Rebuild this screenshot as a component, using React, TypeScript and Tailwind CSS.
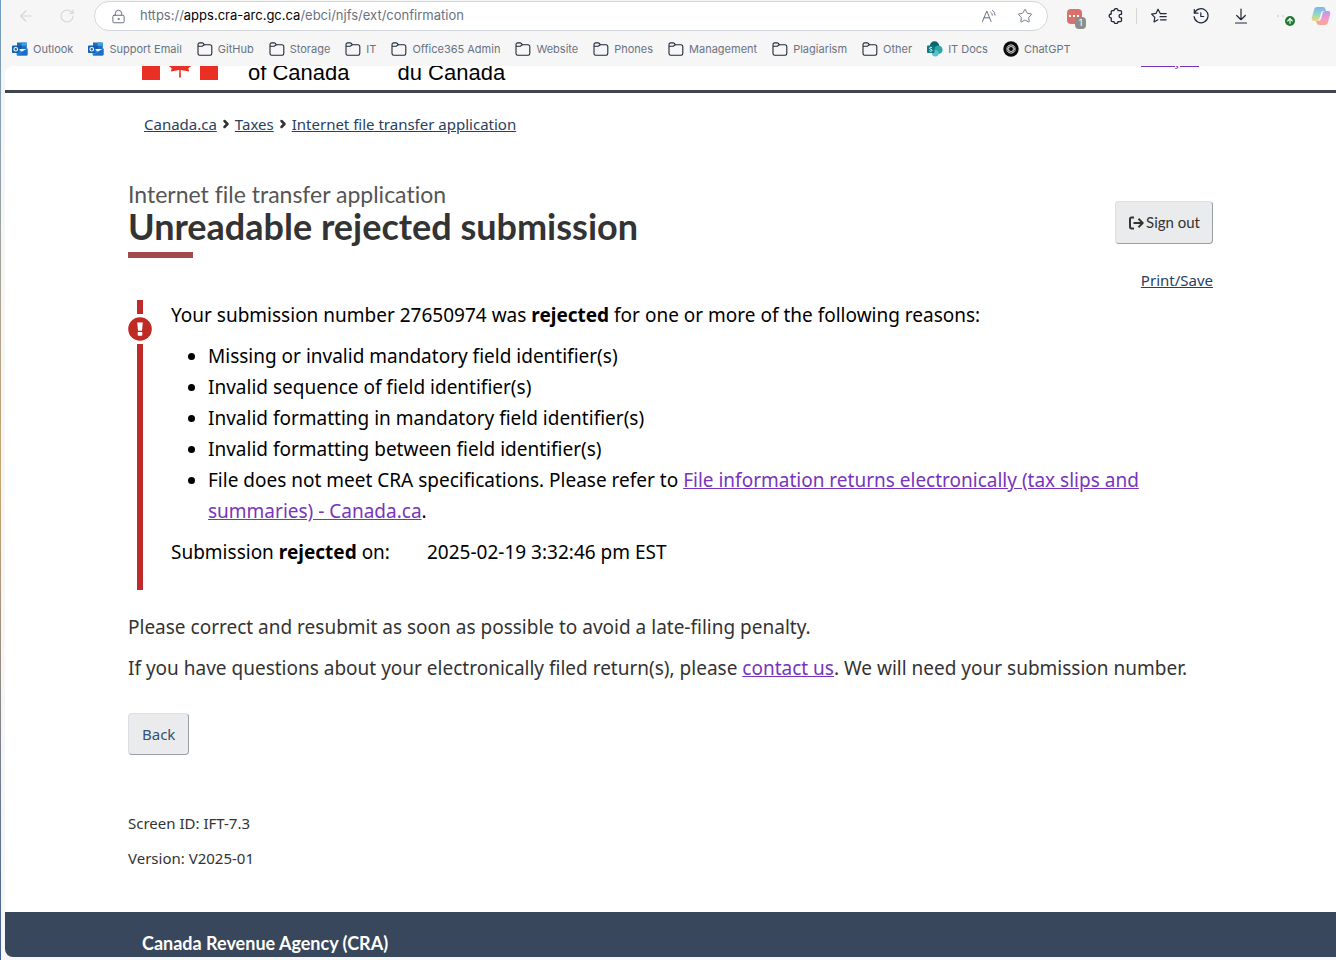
import React from "react";
import {
  ArrowLeft,
  ArrowUp,
  ChevronRight,
  LockKeyhole,
  RotateCw,
  Star,
} from "lucide-react";

const FolderIcon = () => (
  <svg
    viewBox="0 0 16 16"
    className="size-4 shrink-0 text-gray-800"
    fill="none"
    stroke="currentColor"
    strokeWidth="1.1"
    strokeLinejoin="round"
  >
    <path d="M1 4.6V3.5A1.6 1.6 0 0 1 2.6 1.9h2.6c.4 0 .8.2 1.1.5l1.2 1.4h5.6A1.7 1.7 0 0 1 14.8 5.5v7a1.7 1.7 0 0 1-1.7 1.7H2.7A1.7 1.7 0 0 1 1 12.5z" />
    <path d="M1 5.2h3.8c.4 0 .7-.1 1-.4l1.4-1" />
  </svg>
);

const OutlookIcon = () => (
  <svg viewBox="0 0 16 16" className="size-4 shrink-0">
    <path d="M5 1.5h9a.8.8 0 0 1 .8.8V8H5z" fill="#1f6fc0" />
    <path d="M9.5 1.5H14a.8.8 0 0 1 .8.8v2.5H9.5z" fill="#35a3e8" />
    <path d="M5 4.8h4.5V8H5z" fill="#1553a0" />
    <path d="M4.5 7.5 10 10.5l5.5-3v6a1 1 0 0 1-1 1h-9a1 1 0 0 1-1-1z" fill="#2b8be0" />
    <path d="m15.5 7.5-10.6 6.7c.2.2.4.3.6.3h9a1 1 0 0 0 1-1z" fill="#1a6fcb" />
    <rect x="0" y="4.5" width="7.5" height="7.5" rx=".8" fill="#1260b4" />
    <circle cx="3.75" cy="8.25" r="1.8" fill="none" stroke="#fff" strokeWidth="1.1" />
  </svg>
);

const SharePointIcon = () => (
  <svg viewBox="0 0 16 16" className="size-4 shrink-0">
    <circle cx="7.5" cy="5" r="4.7" fill="#0d6368" />
    <circle cx="11.3" cy="8.8" r="4.3" fill="#2ba5a8" />
    <circle cx="8.3" cy="12.3" r="3.3" fill="#54c5cc" />
    <rect x="0" y="4.5" width="7.5" height="7.5" rx=".8" fill="#0f7a80" />
    <path
      d="M5 6.7c-.8-.5-2.5-.5-2.5.6 0 1.2 2.6.7 2.6 2 0 1.2-1.9 1.1-2.7.5"
      fill="none"
      stroke="#fff"
      strokeWidth=".9"
    />
  </svg>
);

const ChatIcon = () => (
  <svg viewBox="0 0 16 16" className="size-4 shrink-0">
    <circle cx="8" cy="8" r="7.7" fill="#0b0b0b" />
    <g fill="none" stroke="#e5e5e5" strokeWidth=".7">
      <rect x="5.7" y="3.6" width="4.6" height="8.8" rx="2.3" />
      <rect x="5.7" y="3.6" width="4.6" height="8.8" rx="2.3" transform="rotate(60 8 8)" />
      <rect x="5.7" y="3.6" width="4.6" height="8.8" rx="2.3" transform="rotate(120 8 8)" />
    </g>
  </svg>
);

const ReadAloudIcon = () => (
  <svg
    viewBox="0 0 16 16"
    className="size-4"
    fill="none"
    stroke="currentColor"
    strokeLinecap="round"
    strokeLinejoin="round"
  >
    <path d="M1.5 13.5 5.8 3l4.3 10.5M3 9.8h5.6" />
    <path d="M9.8 4.2c1 .8 1.5 1.8 1.5 3M11.4 2.2c1.7 1.3 2.6 3 2.6 5" />
  </svg>
);

const PuzzleIcon = () => (
  <svg
    viewBox="0 0 16 16"
    className="size-4"
    fill="none"
    stroke="currentColor"
    strokeWidth="1.3"
    strokeLinejoin="round"
  >
    <path d="M4.2 2.6H6a2 2 0 0 1 4 0h2.5a1 1 0 0 1 1 1v2.7h-.7a1.8 1.8 0 0 0 0 3.6h.7v2.7a1 1 0 0 1-1 1H10a2 2 0 0 1-4 0H4.2a1 1 0 0 1-1-1V10a2 2 0 0 1 0-4V3.6a1 1 0 0 1 1-1z" />
  </svg>
);

const FavoritesIcon = () => (
  <svg
    viewBox="0 0 16 16"
    className="size-4"
    fill="none"
    stroke="currentColor"
    strokeWidth="1.2"
    strokeLinecap="round"
    strokeLinejoin="round"
  >
    <path d="M9.3 5.5 7 1.2 5 5.4l-4.4.7 3.2 3.2L3 14l4-2.2" />
    <path d="M9.5 5.6h5.7M9 8.7h6.2M9.5 11.8h5.7" />
  </svg>
);

const HistoryIcon = () => (
  <svg
    viewBox="0 0 16 16"
    className="size-4"
    fill="none"
    stroke="currentColor"
    strokeWidth="1.2"
    strokeLinecap="round"
    strokeLinejoin="round"
  >
    <path d="M1.3 1.5v3.7H5" />
    <path d="M1.6 5A7 7 0 1 1 1.1 8.6" />
    <path d="M7.8 4.8v3.7h2.9" />
  </svg>
);

const DownloadIcon = () => (
  <svg
    viewBox="0 0 16 16"
    className="size-4"
    fill="none"
    stroke="currentColor"
    strokeWidth="1.2"
    strokeLinecap="round"
    strokeLinejoin="round"
  >
    <path d="M8 1v10.5M3.7 7.5 8 11.7l4.3-4.2M2.5 15h11" />
  </svg>
);

const CopilotIcon = () => (
  <svg viewBox="0 0 20 20" className="size-5">
    <defs>
      <linearGradient id="cop-a" x1="0" y1="0" x2="0" y2="1">
        <stop offset="0" stopColor="#7fb2f5" />
        <stop offset=".5" stopColor="#8fd9c4" />
        <stop offset="1" stopColor="#f5d77c" />
      </linearGradient>
      <linearGradient id="cop-b" x1="0" y1="0" x2="0" y2="1">
        <stop offset="0" stopColor="#b49af5" />
        <stop offset=".5" stopColor="#ef9acb" />
        <stop offset="1" stopColor="#f8ab8c" />
      </linearGradient>
    </defs>
    <path
      d="M6 1h6c1.3 0 2 .7 2.4 2l.5 2h-2.4c-1.3 0-2 .7-2.4 2L8.3 13c-.4 1.3-1 2-2.3 2H3c-2 0-2.7-1.5-2.2-3.3L3 3.8C3.5 2 4.5 1 6 1z"
      fill="url(#cop-a)"
    />
    <path
      d="M14 19H8c-1.3 0-2-.7-2.4-2l-.5-2h2.4c1.3 0 2-.7 2.4-2l1.8-6c.4-1.3 1-2 2.3-2h3c2 0 2.7 1.5 2.2 3.3L17 16.2c-.5 1.8-1.5 2.8-3 2.8z"
      fill="url(#cop-b)"
    />
  </svg>
);

const SignOutIcon = () => (
  <svg
    viewBox="0 0 16 14"
    className="h-3.5 w-4"
    fill="none"
    stroke="currentColor"
    strokeWidth="2"
    strokeLinejoin="round"
  >
    <path d="M6 1.5H3.5A1.5 1.5 0 0 0 2 3v8a1.5 1.5 0 0 0 1.5 1.5H6" />
    <path d="M5.5 7h9M10.5 2.8 14.7 7l-4.2 4.2" />
  </svg>
);

const AlertIcon = () => (
  <svg viewBox="0 0 24 24" className="size-6">
    <circle cx="12" cy="12" r="11.8" fill="#bf2a25" />
    <path d="M9.2 5.5h5.6l-.8 8.2h-4z" fill="#fff" />
    <rect x="9.7" y="15" width="4.6" height="3.7" rx=".6" fill="#fff" />
  </svg>
);

// Only the bottom of the flag shows, the rest is scrolled under the toolbar
const FlagIcon = () => (
  <svg viewBox="0 0 76 36" className="h-9 w-[76px]">
    <path d="M0 0h18v36H0zM58 0h18v36H58z" fill="#ea2f24" />
    <path
      d="m38 1 3.5 6.5 3.5-1.8-1.5 9.3 4.5-4.8 1 2.3 5-.8-1.7 5 2.2 1.3-8.2 6.2.9 3.2-8.5-1.4.2 7.5h-1.8l.2-7.5-8.5 1.4.9-3.2-8.2-6.2 2.2-1.3-1.7-5 5 .8 1-2.3 4.5 4.8L31 5.7l3.5 1.8z"
      fill="#ea2f24"
    />
  </svg>
);

const bookmarks = [
  { name: "Outlook", icon: <OutlookIcon /> },
  { name: "Support Email", icon: <OutlookIcon /> },
  { name: "GitHub", icon: <FolderIcon /> },
  { name: "Storage", icon: <FolderIcon /> },
  { name: "IT", icon: <FolderIcon /> },
  { name: "Office365 Admin", icon: <FolderIcon /> },
  { name: "Website", icon: <FolderIcon /> },
  { name: "Phones", icon: <FolderIcon /> },
  { name: "Management", icon: <FolderIcon /> },
  { name: "Plagiarism", icon: <FolderIcon /> },
  { name: "Other", icon: <FolderIcon /> },
  { name: "IT Docs", icon: <SharePointIcon /> },
  { name: "ChatGPT", icon: <ChatIcon /> },
];

const reasons = [
  "Missing or invalid mandatory field identifier(s)",
  "Invalid sequence of field identifier(s)",
  "Invalid formatting in mandatory field identifier(s)",
  "Invalid formatting between field identifier(s)",
];

const Toolbar = () => (
  <div className="flex h-8 items-center text-gray-800">
    <button aria-label="Back" className="flex w-[42px] justify-center text-gray-300">
      <ArrowLeft className="size-[18px]" strokeWidth={1.5} />
    </button>
    <button aria-label="Reload" className="flex w-10 justify-center text-gray-300">
      <RotateCw className="size-4" strokeWidth={1.6} />
    </button>
    <div className="ml-[7px] flex h-[30px] min-w-0 flex-1 items-center rounded-full border border-gray-300 bg-white pr-3.5 pl-4 text-gray-500">
      <LockKeyhole className="size-[15px] shrink-0" strokeWidth={1.6} />
      {/* The host is darker than the rest of the address */}
      <div className="ml-3.5 flex-1 truncate text-[13px]">
        https://<span className="text-black">apps.cra-arc.gc.ca</span>
        /ebci/njfs/ext/confirmation
      </div>
      <button aria-label="Read aloud" className="mr-5">
        <ReadAloudIcon />
      </button>
      <button aria-label="Add to favorites">
        <Star className="size-4" strokeWidth={1.4} />
      </button>
    </div>
    <button aria-label="Password manager" className="relative ml-2 flex w-10 justify-center">
      <span className="-ml-1 flex size-[15px] items-center justify-center gap-0.5 rounded-sm bg-[#d9716c]">
        <span className="size-0.5 bg-white" />
        <span className="size-0.5 bg-white" />
        <span className="size-0.5 bg-white" />
      </span>
      <span className="absolute top-2 right-2.5 flex h-3 w-[11px] items-center justify-center rounded-sm bg-[#8b8f8b] text-[9px] text-white">
        1
      </span>
    </button>
    <button aria-label="Extensions" className="flex w-10 justify-center">
      <PuzzleIcon />
    </button>
    <span className="h-4 w-px bg-gray-300" />
    <button aria-label="Favorites" className="flex w-11 justify-center">
      <FavoritesIcon />
    </button>
    <button aria-label="History" className="flex w-10 justify-center">
      <HistoryIcon />
    </button>
    <button aria-label="Downloads" className="flex w-10 justify-center">
      <DownloadIcon />
    </button>
    <button aria-label="Settings and more" className="relative flex h-6 w-[50px] items-center justify-center gap-[3px]">
      <span className="size-0.5 rounded-full bg-gray-300" />
      <span className="size-0.5 rounded-full bg-gray-300" />
      <span className="size-2" />
      <span className="absolute right-4 bottom-0.5 flex size-2.5 items-center justify-center rounded-full bg-[#1f7a33] text-white">
        <ArrowUp className="size-2" strokeWidth={3.5} />
      </span>
    </button>
    <button aria-label="Copilot" className="mr-[5px]">
      <CopilotIcon />
    </button>
  </div>
);

const Bookmarks = () => (
  <nav className="flex h-[34px] items-center gap-[15px] pl-[7px] text-[11px] whitespace-nowrap text-gray-500">
    {bookmarks.map((b) => (
      <a key={b.name} href="#" className="flex items-center gap-[5px]">
        {b.icon}
        {b.name}
      </a>
    ))}
  </nav>
);

const SiteHeader = () => (
  <header className="h-[27px] overflow-hidden border-b-[3px] border-[#3d464f]">
    <div className="mx-auto flex h-6 max-w-[1085px] items-end px-3.5">
      <div className="mb-2.5">
        <FlagIcon />
      </div>
      <div className="mb-0.5 ml-[30px] flex gap-12 font-['Liberation_Sans'] text-[22px] text-black">
        <span>of Canada</span>
        <span>du Canada</span>
      </div>
      <a
        href="#"
        className="mb-[19px] ml-auto text-[15px] leading-6 text-[#7834bc] underline"
      >
        Français
      </a>
    </div>
  </header>
);

const Breadcrumbs = () => (
  <nav className="flex items-center gap-[3px] px-4 pt-[19px] text-[15px] leading-6 text-[#284162]">
    <a href="#" className="underline">
      Canada.ca
    </a>
    <ChevronRight className="size-3 text-[#333]" strokeWidth={5} />
    <a href="#" className="underline">
      Taxes
    </a>
    <ChevronRight className="size-3 text-[#333]" strokeWidth={5} />
    <a href="#" className="underline">
      Internet file transfer application
    </a>
  </nav>
);

const RejectedAlert = () => (
  <section className="mt-[42px] flex gap-[19px] text-black">
    <div className="flex w-6 flex-col items-center gap-[3px]">
      <div className="h-3.5 w-1.5 bg-[#bf2a2a]" />
      <AlertIcon />
      <div className="w-1.5 flex-1 bg-[#bf2a2a]" />
    </div>
    <div className="flex-1 pb-[22px]">
      <p>
        Your submission number 27650974 was <b>rejected</b> for one or more of
        the following reasons:
      </p>
      <ul className="my-2.5 list-disc pr-16 pl-[37px]">
        {reasons.map((reason) => (
          <li key={reason}>{reason}</li>
        ))}
        <li>
          File does not meet CRA specifications. Please refer to{" "}
          <a href="#" className="text-[#7834bc] underline">
            File information returns electronically (tax slips and summaries) -
            Canada.ca
          </a>
          .
        </li>
      </ul>
      <p className="flex gap-[37px]">
        <span>
          Submission <b>rejected</b> on:
        </span>
        <span>2025-02-19 3:32:46 pm EST</span>
      </p>
    </div>
  </section>
);

const App = () => {
  return (
    <div className="flex h-screen overflow-hidden bg-[#f6f6f6] font-['Inter',sans-serif] [font-variant-ligatures:none]">
      {/* Desktop edge to the left of the window */}
      <div className="w-px bg-linear-to-b from-[#6f9cc4] via-[#c9a66b] to-[#3f5f96]" />
      <div className="flex min-w-0 flex-1 flex-col pb-[3px]">
        <div className="pl-1">
          <Toolbar />
          <Bookmarks />
        </div>
        <div className="ml-1 flex flex-1 flex-col overflow-hidden rounded-l-lg bg-white font-['Noto_Sans',sans-serif] text-[19px] leading-[31px] text-[#333]">
          <SiteHeader />
          <main className="mx-auto w-full max-w-[1085px] flex-1">
            <Breadcrumbs />
            <div className="mt-[45px] flex items-start justify-between">
              <div className="font-['Lato']">
                <p className="text-[23px] leading-[26px] text-[#555]">
                  Internet file transfer application
                </p>
                <h1 className="text-[36px] leading-[38px] font-bold">
                  Unreadable rejected submission
                </h1>
                <div className="mt-[7px] h-1.5 w-[65px] bg-[#a3484b]" />
              </div>
              <div className="mt-5 flex flex-col items-end text-[15px]">
                <button className="flex h-[43px] items-center gap-0.5 rounded-sm border border-[#dcdee1] border-r-[#9aa0a8] border-b-[#9aa0a8] bg-[#eaebed] px-3 font-['Lato']">
                  <SignOutIcon />
                  Sign out
                </button>
                <a
                  href="#"
                  className="-mb-10 pt-6 leading-6 text-[#284162] underline"
                >
                  Print/Save
                </a>
              </div>
            </div>
            <RejectedAlert />
            <p className="mt-[22px]">
              Please correct and resubmit as soon as possible to avoid a
              late-filing penalty.
            </p>
            <p className="mt-2.5">
              If you have questions about your electronically filed return(s),
              please{" "}
              <a href="#" className="text-[#7834bc] underline">
                contact us
              </a>
              . We will need your submission number.
            </p>
            <button className="mt-[29px] block h-[42px] rounded-sm border border-[#dcdee1] border-r-[#9aa0a8] border-b-[#9aa0a8] bg-[#eaebed] px-[13px] text-[15px] text-[#335075]">
              Back
            </button>
            <div className="mt-14 space-y-[11px] text-[15px] leading-6">
              <p>Screen ID: IFT-7.3</p>
              <p>Version: V2025-01</p>
            </div>
          </main>
          <footer className="h-[45px] bg-[#38475c]">
            <div className="mx-auto max-w-[1085px] px-3.5 pt-4 font-['Lato'] text-[18px] font-bold text-white">
              Canada Revenue Agency (CRA)
            </div>
          </footer>
        </div>
      </div>
    </div>
  );
};

export default App;
